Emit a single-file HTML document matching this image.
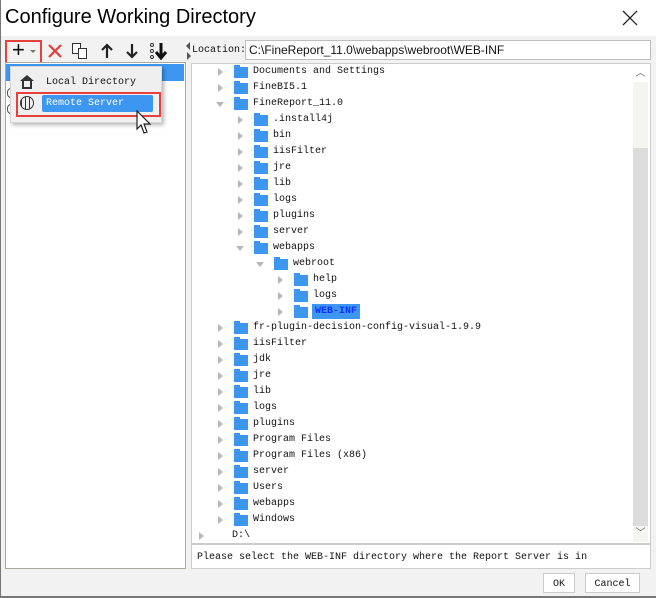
<!DOCTYPE html>
<html><head><meta charset="utf-8"><style>
*{margin:0;padding:0;box-sizing:border-box}
body{width:656px;height:598px;background:#f2f2f3;position:relative;overflow:hidden;font-family:"Liberation Sans",sans-serif}
.abs{position:absolute}
.mono{font-family:"Liberation Mono",monospace;font-size:10px;color:#111;letter-spacing:0}
.row{position:absolute;height:16px;line-height:16px;white-space:nowrap}
.fold{position:absolute;width:14px;height:11px;background:#3d96f0;top:3px}
.fold:before{content:"";position:absolute;left:0;top:-2px;width:6px;height:2px;background:#3d96f0}
.arr{position:absolute;top:4px;width:0;height:0;border-top:4px solid transparent;border-bottom:4px solid transparent;border-left:5px solid #b8b8b8}
.arrd{position:absolute;top:6px;width:0;height:0;border-left:4px solid transparent;border-right:4px solid transparent;border-top:5px solid #b8b8b8}
.txt{position:absolute;top:0}
</style></head><body>
<div class="abs" style="left:0;top:0;width:656px;height:36px;background:#fff"></div>
<div class="abs" style="left:5px;top:6px;font-size:20px;color:#000">Configure Working Directory</div>
<svg class="abs" style="left:622px;top:10px" width="16" height="16"><path d="M1 1L15 15M15 1L1 15" stroke="#222" stroke-width="1.3"/></svg>
<div class="abs" style="left:0;top:0;width:1px;height:598px;background:#777"></div>
<div class="abs" style="left:0;top:596px;width:656px;height:2px;background:#777"></div>

<div class="abs" style="left:5px;top:40px;width:37px;height:24px;border:2px solid #e8403c"></div>
<div class="abs" style="left:12px;top:39px;font-size:22px;color:#111;line-height:22px">+</div>
<div class="abs" style="left:30px;top:50px;width:0;height:0;border-left:3px solid transparent;border-right:3px solid transparent;border-top:3px solid #777"></div>
<svg class="abs" style="left:48px;top:44px" width="14" height="14"><path d="M1 1L13 13M13 1L1 13" stroke="#e83a3a" stroke-width="2.2"/></svg>
<div class="abs" style="left:72px;top:43px;width:9px;height:11px;border:1px solid #333;background:#fff"></div>
<div class="abs" style="left:78px;top:48px;width:9px;height:11px;border:1px solid #333;background:#fff"></div>
<svg class="abs" style="left:101px;top:43px" width="12" height="16"><path d="M6 2V15M1 7L6 2L11 7" stroke="#222" stroke-width="2.2" fill="none"/></svg>
<svg class="abs" style="left:126px;top:43px" width="12" height="16"><path d="M6 1V14M1 9L6 14L11 9" stroke="#222" stroke-width="2.2" fill="none"/></svg>
<div class="abs" style="left:150px;top:43px;width:4px;height:4px;border-radius:2px;border:1px solid #333"></div>
<div class="abs" style="left:150px;top:49px;width:4px;height:4px;border-radius:2px;border:1px solid #333"></div>
<div class="abs" style="left:150px;top:55px;width:4px;height:4px;border-radius:2px;border:1px solid #333"></div>
<svg class="abs" style="left:154px;top:42px" width="14" height="18"><path d="M7 1V16M2 10L7 16L12 10" stroke="#111" stroke-width="3" fill="none"/></svg>

<div class="abs" style="left:5px;top:62px;width:181px;height:507px;background:#fff;border:1px solid #aaa9a0"></div>
<div class="abs" style="left:6px;top:64px;width:178px;height:17px;background:#3d96f0"></div>
<div class="abs" style="left:7px;top:88px;width:8px;height:10px;border-radius:5px;border:1px solid #555"></div>
<div class="abs" style="left:7px;top:104px;width:8px;height:10px;border-radius:5px;border:1px solid #555"></div>

<div class="abs" style="left:10px;top:66px;width:152px;height:57px;background:#efefef;border:1px solid #d8d8d8;box-shadow:2px 2px 4px rgba(0,0,0,.3)"></div>
<div class="abs" style="left:20px;top:75px;width:0;height:0;border-left:7px solid transparent;border-right:7px solid transparent;border-bottom:6px solid #333"></div>
<div class="abs" style="left:22px;top:81px;width:10px;height:8px;border:2px solid #333;border-top:none"></div>
<div class="abs mono" style="left:46px;top:76px;line-height:14px">Local Directory</div>
<div class="abs" style="left:42px;top:95px;width:111px;height:17px;background:#3d96f0;border-radius:2px"></div>
<div class="abs" style="left:20px;top:96px;width:14px;height:14px;border-radius:7px;border:1.5px solid #333;background:repeating-linear-gradient(90deg,#333 0 1px,transparent 1px 4px)"></div>
<div class="abs mono" style="left:46px;top:97px;line-height:14px;color:#fff">Remote Server</div>
<div class="abs" style="left:16px;top:92px;width:145px;height:25px;border:2px solid #e8403c"></div>
<svg class="abs" style="left:136px;top:110px" width="18" height="26" viewBox="0 0 18 26"><path d="M1 1 L1 19 L5 15 L8 23 L11 22 L8 14 L14 14 Z" fill="#fff" stroke="#222" stroke-width="1.2"/></svg>

<div class="abs" style="left:186px;top:42px;width:0;height:0;border-top:4px solid transparent;border-bottom:4px solid transparent;border-right:4px solid #555"></div>
<div class="abs" style="left:187px;top:52px;width:0;height:0;border-top:4px solid transparent;border-bottom:4px solid transparent;border-left:4px solid #555"></div>

<div class="abs mono" style="left:192px;top:44px;font-size:10px;line-height:14px">Location:</div>
<div class="abs" style="left:245px;top:40px;width:406px;height:20px;background:#fff;border:1px solid #bdbdbd"></div>
<div class="abs" style="left:249px;top:42px;font-size:12px;line-height:16px;color:#111">C:\FineReport_11.0\webapps\webroot\WEB-INF</div>

<div class="abs" style="left:191px;top:63px;width:460px;height:481px;background:#fff;border:1px solid #ccc"></div>
<div class="abs" style="left:633px;top:66px;width:15px;height:476px;background:#dcdcdc"></div>
<div class="abs" style="left:633px;top:66px;width:15px;height:82px;background:#f4f4f1"></div>
<div class="abs" style="left:633px;top:66px;width:15px;height:16px;background:#fff;color:#666;font-size:10px;text-align:center;line-height:16px">︿</div>
<div class="abs" style="left:633px;top:526px;width:15px;height:16px;background:#f4f4f1;color:#666;font-size:10px;text-align:center;line-height:16px">﹀</div>
<div id="tree" class="mono"></div>
<div class="row mono" style="left:195px;top:528px"><span class="arr" style="left:4px"></span><span class="txt" style="left:37px">D:\</span></div>

<div class="abs" style="left:191px;top:544px;width:460px;height:25px;background:#fff;border:1px solid #ccc"></div>
<div class="abs mono" style="left:197px;top:551px;line-height:14px">Please select the WEB-INF directory where the Report Server is in</div>

<div class="abs mono" style="left:543px;top:573px;width:32px;height:20px;background:#fff;border:1px solid #ccc;text-align:center;line-height:21px">OK</div>
<div class="abs mono" style="left:585px;top:573px;width:55px;height:20px;background:#fff;border:1px solid #ccc;text-align:center;line-height:21px">Cancel</div>

<script>
var d=[[0,"Documents and Settings","r"],[0,"FineBI5.1","r"],[0,"FineReport_11.0","d"],[1,".install4j","r"],[1,"bin","r"],[1,"iisFilter","r"],[1,"jre","r"],[1,"lib","r"],[1,"logs","r"],[1,"plugins","r"],[1,"server","r"],[1,"webapps","d"],[2,"webroot","d"],[3,"help","r"],[3,"logs","r"],[3,"WEB-INF","r"],[0,"fr-plugin-decision-config-visual-1.9.9","r"],[0,"iisFilter","r"],[0,"jdk","r"],[0,"jre","r"],[0,"lib","r"],[0,"logs","r"],[0,"plugins","r"],[0,"Program Files","r"],[0,"Program Files (x86)","r"],[0,"server","r"],[0,"Users","r"],[0,"webapps","r"],[0,"Windows","r"]];
var h="";d.forEach(function(r,i){var y=64+i*16,x=216+r[0]*20;
h+='<div class="row" style="left:'+x+'px;top:'+y+'px">'+(r[2]=="d"?'<span class="arrd" style="left:0"></span>':'<span class="arr" style="left:2px"></span>')+'<span class="fold" style="left:18px"></span>'+(r[1]=="WEB-INF"?'<span class="txt" style="left:36px;background:#3d96f0;color:#1030ff;font-weight:bold;padding:0 3px;line-height:15px">WEB-INF</span>':'<span class="txt" style="left:37px">'+r[1]+'</span>')+'</div>';});
document.getElementById("tree").innerHTML=h;
</script>
</body></html>
